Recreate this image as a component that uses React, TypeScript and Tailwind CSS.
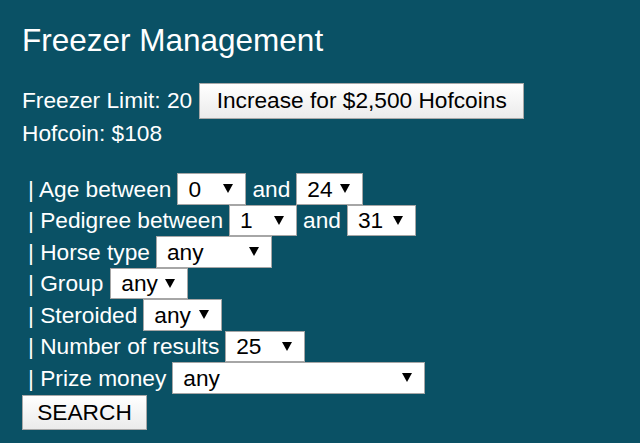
import React from "react";

function Arrow() {
  return (
    <svg width="10" height="9" viewBox="0 0 10 9" className="shrink-0">
      <polygon points="0,0 10,0 5,9" fill="#000" />
    </svg>
  );
}

function Sel({ value, w }: { value: string; w: string }) {
  return (
    <div
      className={`${w} h-[31.5px] shrink-0 bg-white border border-[#a6a6a6] flex items-center justify-between pl-[10px] pr-[12px] text-black`}
    >
      <span>{value}</span>
      <Arrow />
    </div>
  );
}

function Btn({ children, cls }: { children: React.ReactNode; cls: string }) {
  return (
    <div
      className={`${cls} shrink-0 border border-[#a8a8a8] bg-gradient-to-b from-[#ffffff] to-[#ebebeb] text-black flex items-center justify-center`}
    >
      {children}
    </div>
  );
}

function Row({ children }: { children: React.ReactNode }) {
  return <div className="flex items-center h-[31.5px] whitespace-nowrap">{children}</div>;
}

export default function App() {
  return (
    <div
      className="w-full min-h-screen bg-[#0a5165] text-white pl-[22px] pt-[22px]"
      style={{ fontFamily: '"Liberation Sans", Arial, sans-serif' }}
    >
      <h1 className="text-[31.5px] leading-[36px] font-normal">Freezer Management</h1>
      <div className="text-[22.7px] mt-[24px]">
        <div className="flex items-center h-[37px]">
          <span>Freezer Limit: 20</span>
          <Btn cls="ml-[7px] w-[325px] h-[36px]">Increase for $2,500 Hofcoins</Btn>
        </div>
        <div className="leading-[28px]">Hofcoin: $108</div>
        <div className="mt-[26px]">
          <Row>
            <span className="pl-[6px]">| Age between</span>
            <span className="ml-[6px]"><Sel value="0" w="w-[69px]" /></span>
            <span className="ml-[6px]">and</span>
            <span className="ml-[6px]"><Sel value="24" w="w-[67px]" /></span>
          </Row>
          <Row>
            <span className="pl-[6px]">| Pedigree between</span>
            <span className="ml-[6px]"><Sel value="1" w="w-[68px]" /></span>
            <span className="ml-[6px]">and</span>
            <span className="ml-[6px]"><Sel value="31" w="w-[69px]" /></span>
          </Row>
          <Row>
            <span className="pl-[6px]">| Horse type</span>
            <span className="ml-[6px]"><Sel value="any" w="w-[116px]" /></span>
          </Row>
          <Row>
            <span className="pl-[6px]">| Group</span>
            <span className="ml-[7px]"><Sel value="any" w="w-[78px]" /></span>
          </Row>
          <Row>
            <span className="pl-[6px]">| Steroided</span>
            <span className="ml-[6px]"><Sel value="any" w="w-[79px]" /></span>
          </Row>
          <Row>
            <span className="pl-[6px]">| Number of results</span>
            <span className="ml-[6px]"><Sel value="25" w="w-[80px]" /></span>
          </Row>
          <Row>
            <span className="pl-[6px]">| Prize money</span>
            <span className="ml-[6px]"><Sel value="any" w="w-[253px]" /></span>
          </Row>
          <Btn cls="mt-[1.5px] w-[125px] h-[35px]">SEARCH</Btn>
        </div>
      </div>
    </div>
  );
}
